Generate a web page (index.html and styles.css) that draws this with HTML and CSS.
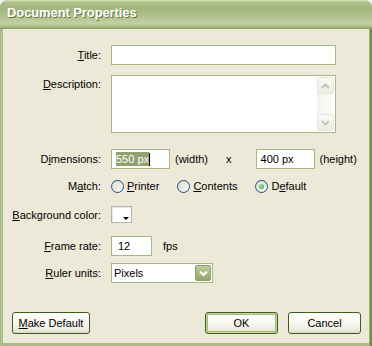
FILE: index.html
```html
<!DOCTYPE html>
<html lang="en">
<head>
  <meta charset="UTF-8">
  <title>Document Properties</title>
  <link rel="stylesheet" href="styles.css">
</head>
<body>

  <div class="window">
    <div class="titlebar">
      <span class="title">Document Properties</span>
    </div>

    <div class="client">
      <div class="form">
        <div class="row">
          <label class="lbl"><u>T</u>itle:</label>
          <div class="edit edit-wide"></div>
        </div>

        <div class="row row-desc">
          <label class="lbl"><u>D</u>escription:</label>
          <div class="edit textarea">
            <div class="scroll">
              <div class="sbtn">
                <svg width="9" height="6" viewBox="0 0 9 6"><polyline points="1,5 4.5,1.5 8,5" fill="none" stroke="#c3c3bb" stroke-width="2"/></svg>
              </div>
              <div class="sbtn">
                <svg width="9" height="6" viewBox="0 0 9 6"><polyline points="1,1 4.5,4.5 8,1" fill="none" stroke="#c3c3bb" stroke-width="2"/></svg>
              </div>
            </div>
          </div>
        </div>

        <div class="row row-dim">
          <label class="lbl">D<u>i</u>mensions:</label>
          <div class="edit edit-dim"><span class="sel">550 px</span><span class="caret"></span></div>
          <span class="unit">(width)</span>
          <span class="times">x</span>
          <div class="edit edit-dim">400 px</div>
          <span class="unit">(height)</span>
        </div>

        <div class="row row-match">
          <label class="lbl">M<u>a</u>tch:</label>
          <span class="radio"></span><span class="opt opt-gap"><u>P</u>rinter</span>
          <span class="radio"></span><span class="opt opt-gap"><u>C</u>ontents</span>
          <span class="radio checked"></span><span class="opt">D<u>e</u>fault</span>
        </div>

        <div class="row row-bg">
          <label class="lbl"><u>B</u>ackground color:</label>
          <div class="swatch"><span class="arrow"></span></div>
        </div>

        <div class="row row-rate">
          <label class="lbl"><u>F</u>rame rate:</label>
          <div class="edit edit-rate">12</div>
          <span class="fps">fps</span>
        </div>

        <div class="row row-ruler">
          <label class="lbl"><u>R</u>uler units:</label>
          <div class="edit combo">
            <span>Pixels</span>
            <div class="drop">
              <svg width="9" height="7" viewBox="0 0 9 7"><polyline points="1,1.5 4.5,5 8,1.5" fill="none" stroke="#fff" stroke-width="2"/></svg>
            </div>
          </div>
        </div>
      </div>

      <div class="buttons">
        <button class="btn btn-wide"><u>M</u>ake Default</button>
        <span class="spacer"></span>
        <button class="btn btn-default">OK</button>
        <button class="btn">Cancel</button>
      </div>
    </div>
  </div>

</body>
</html>
```

FILE: styles.css
```css
body {
  margin: 0;
  background-color: #f4f4ee;
  font-family: "Liberation Sans", Arial, sans-serif;
  font-size: 11px;
  color: #000;
}
.window {
  width: 372px;
  height: 346px;
  display: flex;
  flex-direction: column;
  border-radius: 8px 8px 0 0;
  overflow: hidden;
  background: linear-gradient(to right, #8fa26a 0, #c3cfa2 1px, #a9ba86 2px, #a9ba86 369px, #8c9e66 370px, #6f8248 371px);
}
.titlebar {
  height: 29px;
  flex: none;
  box-sizing: border-box;
  padding: 5px 0 0 7px;
  background: linear-gradient(to bottom, #e3eacd 0, #c2cf9f 1px, #adbf88 3px, #a4b67e 9px, #b0c18b 16px, #c4d0a3 23px, #b4c48f 26px, #94a76b 28px, #8a9d62 29px);
}
.title {
  font-size: 13px;
  font-weight: bold;
  color: #fff;
  letter-spacing: -0.1px;
  text-shadow: 1px 1px 0 #64753f;
}
.client {
  flex: 1;
  margin: 0 3px 3px;
  background-color: #ece9d8;
  display: flex;
  flex-direction: column;
}
.form {
  padding-top: 16px;
}
.row {
  display: flex;
  align-items: center;
  height: 20px;
}
.lbl {
  width: 98px;
  margin-right: 10px;
  text-align: right;
  flex: none;
}
.edit {
  box-sizing: border-box;
  height: 20px;
  background-color: #fff;
  border: 1px solid #a5b883;
  padding: 0 4px;
  line-height: 18px;
  white-space: nowrap;
}
.edit-wide {
  width: 225px;
}
.row-desc {
  margin-top: 10px;
  height: 58px;
  align-items: flex-start;
}
.row-desc .lbl {
  padding-top: 3px;
}
.textarea {
  width: 225px;
  height: 58px;
  position: relative;
}
.scroll {
  position: absolute;
  top: 1px;
  right: 1px;
  bottom: 1px;
  width: 17px;
  display: flex;
  flex-direction: column;
  justify-content: space-between;
  background: linear-gradient(to right, #f3f3ee, #fdfdfb);
}
.sbtn {
  box-sizing: border-box;
  height: 17px;
  border: 1px solid #e6e5dc;
  border-radius: 2px;
  background: linear-gradient(to bottom, #fbfbf8, #ebebe3);
  display: flex;
  align-items: center;
  justify-content: center;
}
.row-dim {
  margin-top: 16px;
}
.edit-dim {
  width: 59px;
}
.sel {
  background-color: #93a070;
  color: #fff;
  padding: 1px 0;
}
.caret {
  display: inline-block;
  width: 1px;
  height: 13px;
  background-color: #000;
  vertical-align: -3px;
}
.unit {
  margin-left: 5px;
}
.times {
  margin: 0 24px 0 18px;
}
.row-match {
  margin-top: 7px;
}
.radio {
  box-sizing: border-box;
  width: 13px;
  height: 13px;
  border: 1px solid #1c5180;
  border-radius: 50%;
  background: linear-gradient(135deg, #dcdbd3, #fbfbf8);
  flex: none;
  position: relative;
}
.radio.checked::after {
  content: "";
  position: absolute;
  left: 3px;
  top: 3px;
  width: 5px;
  height: 5px;
  border-radius: 50%;
  background: radial-gradient(circle at 40% 40%, #a6e8a1, #25a024);
}
.opt {
  margin-left: 3px;
}
.opt-gap {
  margin-right: 18px;
}
.row-bg {
  margin-top: 10px;
  height: 17px;
}
.swatch {
  box-sizing: border-box;
  width: 21px;
  height: 17px;
  background-color: #fff;
  border: 1px solid #b5b4ac;
  box-shadow: inset 1px 1px 0 #e8e7e0;
  position: relative;
}
.arrow {
  position: absolute;
  right: 2px;
  bottom: 2px;
  border-left: 3px solid transparent;
  border-right: 3px solid transparent;
  border-top: 3px solid #000;
}
.row-rate {
  margin-top: 13px;
}
.edit-rate {
  width: 41px;
  padding-left: 6px;
}
.fps {
  margin-left: 11px;
}
.row-ruler {
  margin-top: 7px;
}
.combo {
  width: 102px;
  display: flex;
  align-items: center;
  justify-content: space-between;
  padding: 0 1px 0 2px;
}
.drop {
  box-sizing: border-box;
  width: 16px;
  height: 16px;
  border: 1px solid #8fa26a;
  border-radius: 2px;
  background: linear-gradient(to bottom, #c0cf9e, #a3b47c 60%, #93a56b);
  display: flex;
  align-items: center;
  justify-content: center;
}
.buttons {
  margin-top: auto;
  display: flex;
  padding: 0 8px 9px 9px;
}
.spacer {
  flex: 1;
}
.btn {
  box-sizing: border-box;
  width: 73px;
  height: 22px;
  margin: 0;
  padding: 0;
  font-family: "Liberation Sans", Arial, sans-serif;
  font-size: 11px;
  color: #000;
  border: 1px solid #3d5c1e;
  border-radius: 3px;
  background: linear-gradient(to bottom, #ffffff 0, #f6f5ee 60%, #e9e6d8 90%, #d8d3c2 100%);
}
.btn + .btn {
  margin-left: 10px;
}
.btn-wide {
  width: 78px;
}
.btn-default {
  box-shadow: inset 0 0 0 1px #c6d6a2, inset 0 0 0 2px #a6bb7a;
}
```
